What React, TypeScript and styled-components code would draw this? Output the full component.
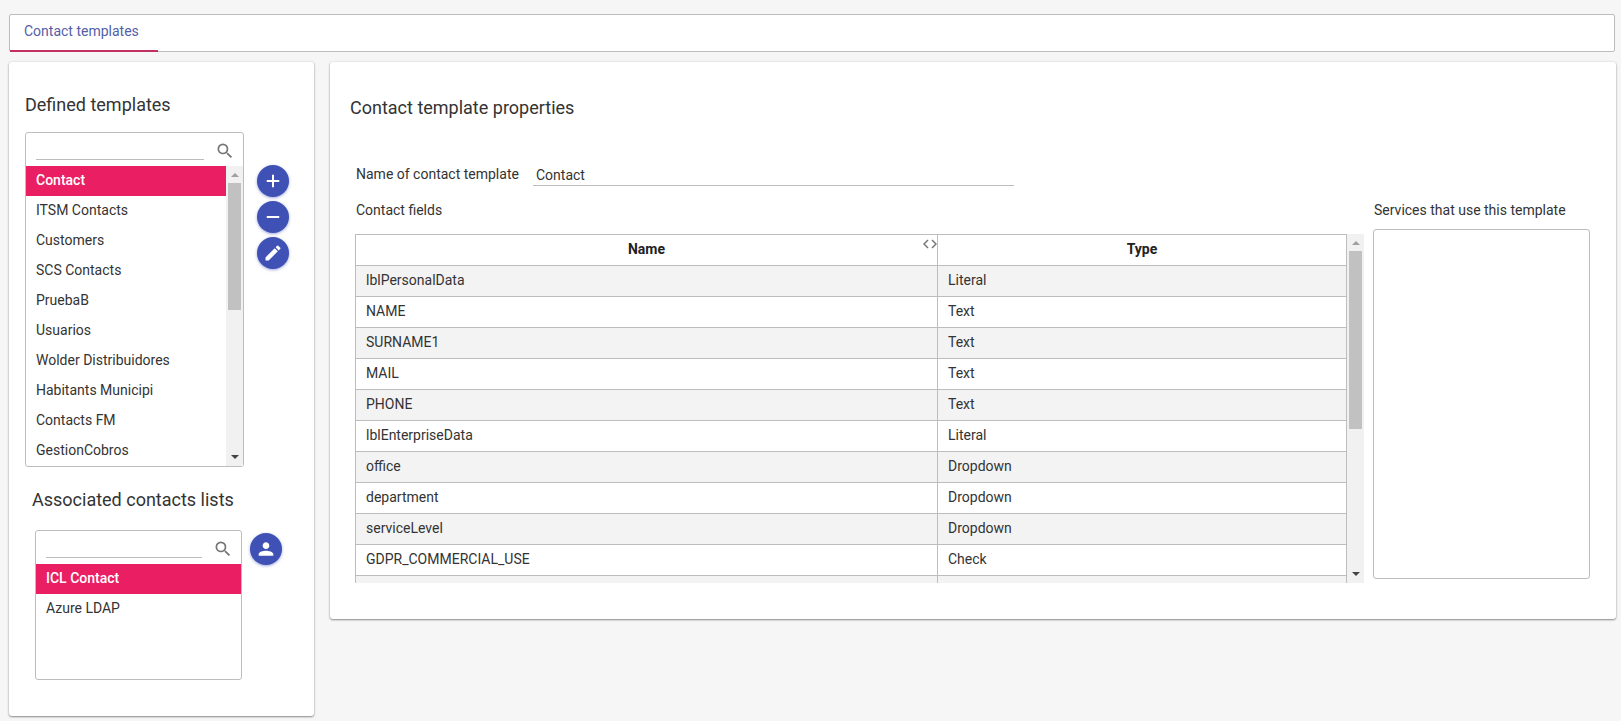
import React, { useState } from "react";
import styled, { createGlobalStyle } from "styled-components";

const line = "#bdbdbd";
const indigo = "#3f51b5";
const pink = "#e91e63";

const GlobalStyle = createGlobalStyle`
  *, *::before, *::after { box-sizing: border-box; }
  body {
    margin: 0;
    background: #f6f6f6;
    color: #333;
    font: 14px/20px Roboto, "Liberation Sans", sans-serif;
  }
  button, input { font: inherit; color: inherit; }
`;

const Page = styled.div`
  padding: 14px 5px 3px 9px;
`;

const TabBar = styled.nav`
  display: flex;
  height: 38px;
  margin: 0 1px 10px 0;
  background: #fff;
  border: 1px solid ${line};
  border-radius: 2px;
`;

const Tab = styled.button`
  min-width: 148px;
  height: 37px;
  padding: 0 14px 4px;
  background: none;
  border: 0;
  border-bottom: 2px solid #c2305f;
  color: #5360a8;
  text-align: left;
`;

const Columns = styled.main`
  display: grid;
  grid-template-columns: 305px minmax(0, 1fr);
  gap: 16px;
  align-items: start;
`;

const Card = styled.section<{ $pad: string }>`
  padding: ${(p) => p.$pad};
  background: #fff;
  border-radius: 3px;
  box-shadow: 0 1px 2px rgba(0, 0, 0, 0.42), 0 0 3px rgba(0, 0, 0, 0.1);
`;

const Heading = styled.h2`
  margin: 0;
  font-size: 18px;
  line-height: 24px;
  font-weight: 400;
`;

const Group = styled.div<{ $indent?: number }>`
  display: flex;
  align-items: flex-start;
  gap: ${(p) => (p.$indent ? 8 : 13)}px;
  padding-left: ${(p) => p.$indent ?? 0}px;
`;

const ListBox = styled.div<{ $width: number }>`
  width: ${(p) => p.$width}px;
  background: #fff;
  border: 1px solid ${line};
  border-radius: 3px;
`;

const SearchRow = styled.label`
  display: flex;
  align-items: center;
  justify-content: space-between;
  gap: 11px;
  height: 33px;
  padding: 2px 8px 0 10px;
`;

const SearchInput = styled.input`
  flex: 1;
  min-width: 0;
  height: 20px;
  margin-bottom: 2px;
  padding: 0 4px;
  background: none;
  border: 0;
  border-bottom: 1px solid ${line};
  outline: 0;
`;

const ListBody = styled.div<{ $height: number }>`
  display: flex;
  height: ${(p) => p.$height}px;
`;

const List = styled.ul`
  flex: 1;
  min-width: 0;
  margin: 0;
  padding: 0;
  overflow: hidden;
  list-style: none;
`;

const Item = styled.button<{ $active: boolean }>`
  display: block;
  width: 100%;
  height: 30px;
  padding: 0 10px 2px;
  border: 0;
  text-align: left;
  background: ${(p) => (p.$active ? pink : "transparent")};
  color: ${(p) => (p.$active ? "#fff" : "inherit")};
  font-weight: ${(p) => (p.$active ? 500 : 400)};
`;

const ButtonStack = styled.div<{ $top: number }>`
  display: flex;
  flex-direction: column;
  gap: 4px;
  padding-top: ${(p) => p.$top}px;
`;

const RoundButton = styled.button`
  display: flex;
  align-items: center;
  justify-content: center;
  width: 32px;
  height: 32px;
  padding: 0;
  background: ${indigo};
  color: #fff;
  border: 0;
  border-radius: 50%;
  box-shadow: 0 1px 3px rgba(63, 81, 181, 0.5);
`;

const Track = styled.div`
  display: flex;
  flex-direction: column;
  align-items: center;
  width: 17px;
  background: #f1f1f1;
`;

const ArrowBox = styled.span<{ $end?: boolean }>`
  display: flex;
  align-items: center;
  justify-content: center;
  height: ${(p) => (p.$end ? 19 : 17)}px;
  margin-top: ${(p) => (p.$end ? "auto" : "0")};
  color: ${(p) => (p.$end ? "#444" : "#a0a0a0")};
`;

const Thumb = styled.div<{ $height: number }>`
  width: 13px;
  height: ${(p) => p.$height}px;
  background: #c1c1c1;
`;

const Properties = styled.div`
  padding: 0 1px 0 5px;
`;

const NameRow = styled.div`
  display: flex;
  align-items: flex-end;
  gap: 9px;
  margin-top: 42px;
  padding-left: 1px;
`;

const NameLabel = styled.label`
  min-width: 168px;
  padding-bottom: 2px;
`;

const NameInput = styled.input`
  width: 39%;
  height: 24px;
  padding: 2px 3px 0;
  background: none;
  border: 0;
  border-bottom: 1px solid ${line};
  border-radius: 0;
  outline: 0;
`;

const FieldsLayout = styled.div`
  display: grid;
  grid-template-columns: minmax(0, 1fr) 217px;
  gap: 9px;
  margin-top: 14px;
`;

const Caption = styled.h3<{ $gap: number }>`
  margin: 0 0 ${(p) => p.$gap}px;
  padding-left: 1px;
  font-size: 14px;
  line-height: 20px;
  font-weight: 400;
`;

const TableFrame = styled.div`
  display: flex;
  height: 349px;
  overflow: hidden;
`;

const TableClip = styled.div`
  flex: 1;
  min-width: 0;
  overflow: hidden;
`;

const Table = styled.table`
  width: 100%;
  table-layout: fixed;
  border-spacing: 0;
  border-left: 1px solid ${line};
  border-top: 1px solid ${line};
  th, td {
    height: 31px;
    padding: 0 10px 2px;
    border-right: 1px solid ${line};
    border-bottom: 1px solid ${line};
    text-align: left;
  }
  th {
    position: relative;
    font-weight: 700;
    text-align: center;
    color: #222;
  }
  th:last-child { width: 409px; }
  tbody tr:nth-child(odd) { background: #f3f3f3; }
`;

const Grip = styled.span`
  position: absolute;
  top: 4px;
  right: 0;
  display: flex;
  color: #777;
`;

const ServicesBox = styled.div`
  height: 350px;
  border: 1px solid ${line};
  border-radius: 3px;
`;

const SearchIcon = () => (
  <svg width="20" height="20" viewBox="0 0 24 24" fill="#757575" aria-hidden="true">
    <path d="M15.5 14h-.79l-.28-.27A6.47 6.47 0 0 0 16 9.5 6.5 6.5 0 1 0 9.5 16c1.61 0 3.09-.59 4.23-1.57l.27.28v.79l5 4.99L20.49 19l-4.99-5zm-6 0C7.01 14 5 11.99 5 9.5S7.01 5 9.5 5 14 7.01 14 9.5 11.99 14 9.5 14z" />
  </svg>
);

const Glyph = ({ d }: { d: string }) => (
  <svg width="20" height="20" viewBox="0 0 24 24" fill="currentColor" aria-hidden="true">
    <path d={d} />
  </svg>
);

const glyphs = {
  add: "M19.5 13.2h-6.3v6.3h-2.4v-6.3H4.5v-2.4h6.3V4.5h2.4v6.3h6.3v2.4z",
  remove: "M19.5 13.2h-15v-2.4h15v2.4z",
  edit: "M3 17.25V21h3.75L17.81 9.94l-3.75-3.75L3 17.25zM20.71 7.04a1 1 0 0 0 0-1.41l-2.34-2.34a1 1 0 0 0-1.41 0l-1.83 1.83 3.75 3.75 1.83-1.83z",
  person: "M12 12c2.21 0 4-1.79 4-4s-1.79-4-4-4-4 1.79-4 4 1.79 4 4 4zm0 2c-3 0-8.8 1.34-8.8 4v2h17.6v-2c0-2.66-5.8-4-8.8-4z",
};

function Scrollbar({ thumb }: { thumb: number }) {
  return (
    <Track aria-hidden="true">
      <ArrowBox>
        <svg width="8" height="4" viewBox="0 0 8 4"><path d="M0 4L4 0l4 4z" fill="currentColor" /></svg>
      </ArrowBox>
      <Thumb $height={thumb} />
      <ArrowBox $end>
        <svg width="8" height="4" viewBox="0 0 8 4"><path d="M0 0h8L4 4z" fill="currentColor" /></svg>
      </ArrowBox>
    </Track>
  );
}

interface PickerProps {
  label: string;
  items: string[];
  width: number;
  height: number;
  thumb?: number;
}

function Picker({ label, items, width, height, thumb }: PickerProps) {
  const [active, setActive] = useState(items[0]);
  const [query, setQuery] = useState("");
  const shown = items.filter((i) => i.toLowerCase().includes(query.toLowerCase()));
  return (
    <ListBox $width={width}>
      <SearchRow>
        <SearchInput aria-label={label} value={query} onChange={(e) => setQuery(e.target.value)} />
        <SearchIcon />
      </SearchRow>
      <ListBody $height={height}>
        <List>
          {shown.map((item) => (
            <li key={item}>
              <Item type="button" $active={item === active} onClick={() => setActive(item)}>
                {item}
              </Item>
            </li>
          ))}
        </List>
        {thumb && <Scrollbar thumb={thumb} />}
      </ListBody>
    </ListBox>
  );
}

const templates = [
  "Contact", "ITSM Contacts", "Customers", "SCS Contacts", "PruebaB", "Usuarios",
  "Wolder Distribuidores", "Habitants Municipi", "Contacts FM", "GestionCobros",
];

const fields = [
  ["lblPersonalData", "Literal"],
  ["NAME", "Text"],
  ["SURNAME1", "Text"],
  ["MAIL", "Text"],
  ["PHONE", "Text"],
  ["lblEnterpriseData", "Literal"],
  ["office", "Dropdown"],
  ["department", "Dropdown"],
  ["serviceLevel", "Dropdown"],
  ["GDPR_COMMERCIAL_USE", "Check"],
  ["", ""],
];

const DefinedHeading = styled(Heading)`
  margin-bottom: 15px;
`;

const AssociatedHeading = styled(Heading)`
  margin: 21px 0 18px;
  padding-left: 7px;
`;

export default function App() {
  const [name, setName] = useState("Contact");
  return (
    <Page>
      <GlobalStyle />
      <TabBar>
        <Tab type="button">Contact templates</Tab>
      </TabBar>
      <Columns>
        <Card $pad="31px 16px 36px">
          <DefinedHeading>Defined templates</DefinedHeading>
          <Group>
            <Picker label="Search templates" items={templates} width={219} height={300} thumb={127} />
            <ButtonStack $top={33}>
              <RoundButton type="button" aria-label="Add template"><Glyph d={glyphs.add} /></RoundButton>
              <RoundButton type="button" aria-label="Remove template"><Glyph d={glyphs.remove} /></RoundButton>
              <RoundButton type="button" aria-label="Edit template"><Glyph d={glyphs.edit} /></RoundButton>
            </ButtonStack>
          </Group>
          <AssociatedHeading>Associated contacts lists</AssociatedHeading>
          <Group $indent={10}>
            <Picker label="Search contact lists" items={["ICL Contact", "Azure LDAP"]} width={207} height={115} />
            <ButtonStack $top={3}>
              <RoundButton type="button" aria-label="Contacts"><Glyph d={glyphs.person} /></RoundButton>
            </ButtonStack>
          </Group>
        </Card>
        <Card $pad="34px 25px 36px 20px">
          <Heading>Contact template properties</Heading>
          <Properties>
            <NameRow>
              <NameLabel htmlFor="template-name">Name of contact template</NameLabel>
              <NameInput id="template-name" value={name} onChange={(e) => setName(e.target.value)} />
            </NameRow>
            <FieldsLayout>
              <div>
                <Caption $gap={14}>Contact fields</Caption>
                <TableFrame>
                  <TableClip>
                    <Table>
                      <thead>
                        <tr>
                          <th scope="col">
                            Name
                            <Grip>
                              <svg width="14" height="10" viewBox="0 0 14 10" fill="none" stroke="currentColor" strokeWidth="1.5" aria-hidden="true">
                                <path d="M5 1L1 5l4 4M9 1l4 4-4 4" />
                              </svg>
                            </Grip>
                          </th>
                          <th scope="col">Type</th>
                        </tr>
                      </thead>
                      <tbody>
                        {fields.map(([field, type], i) => (
                          <tr key={i}>
                            <td>{field}</td>
                            <td>{type}</td>
                          </tr>
                        ))}
                      </tbody>
                    </Table>
                  </TableClip>
                  <Scrollbar thumb={178} />
                </TableFrame>
              </div>
              <div>
                <Caption $gap={9}>Services that use this template</Caption>
                <ServicesBox />
              </div>
            </FieldsLayout>
          </Properties>
        </Card>
      </Columns>
    </Page>
  );
}
